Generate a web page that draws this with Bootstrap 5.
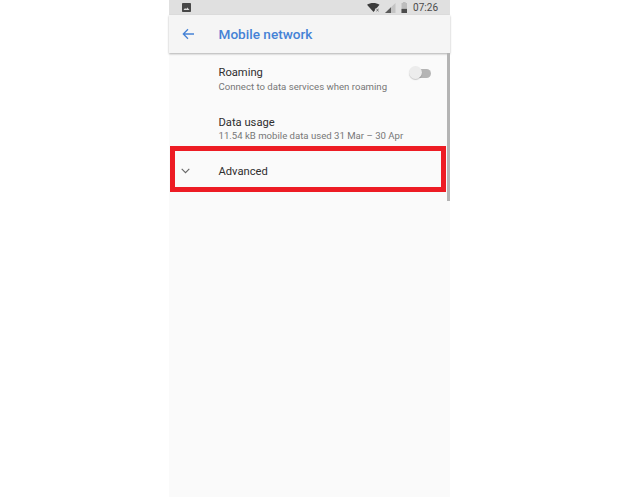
<!DOCTYPE html>
<html lang="en">
<head>
<meta charset="utf-8">
<title>Mobile network</title>
<link href="https://cdn.jsdelivr.net/npm/bootstrap@5.3.0/dist/css/bootstrap.min.css" rel="stylesheet">
<style>
html,body{height:100%;background:#fff;overflow:hidden}
body{font-family:Roboto,"Liberation Sans",sans-serif}
.phone{width:281px;height:497px;margin-left:169px;background:#fafafa;position:relative}
.statusbar{height:15px;background:#e0e0e0;padding:0 12px 0 13px;color:#444}
.stat-icons{gap:5px}
.clock{font-size:10px;color:#4a4a4a;line-height:15px;margin-left:1px}
.appbar{height:38px;background:#f5f5f5;box-shadow:0 1px 2px rgba(0,0,0,.3);position:relative;color:#3f7fd0}
.backcell{width:49.5px;padding-left:13px}
.apptitle{font-size:13.6px;font-weight:500;color:#4582d6;margin:0}
.rowitem{padding-left:49.5px;padding-right:19px}
.rowa{height:48px;padding-top:12px}
.rowb{height:50px;padding-top:14.5px}
.rowb .ttl{line-height:13px}
.rowc{height:40px;color:#333}
.ttl{font-size:11.2px;line-height:15px;color:#2f2f2f}
.sub{font-size:9.6px;line-height:13px;color:#777;white-space:nowrap}
.chev{width:49.5px;padding-left:12px}
.switcher{width:22px;height:14px;position:relative;margin-top:1px}
.track{position:absolute;left:3px;right:0;top:2.5px;height:9px;border-radius:4.5px;background:#b5b5b5}
.thumb{position:absolute;left:0;top:0;width:13px;height:13px;border-radius:50%;background:#ececec;box-shadow:0 1px 1px rgba(0,0,0,.2)}
.redbox{position:absolute;left:1px;top:146px;width:276px;height:46px;border:5px solid #ed1c24}
.scrollthumb{position:absolute;right:0;top:53px;width:3px;height:148px;background:#b4b4b4}
</style>
</head>
<body>
<div class="phone">
  <div class="statusbar d-flex align-items-center justify-content-between">
    <svg width="9" height="9" viewBox="0 0 9 9"><rect width="9" height="9" rx=".8" fill="#484848"/><path d="M1.5 7l1.600-2 1 1.200 1.200-1.600L7.500 7z" fill="#e0e0e0"/></svg>
    <div class="stat-icons d-flex align-items-center">
      <svg width="13" height="9" viewBox="0 0 13 9"><path d="M0 1.800C3.500-.6 9-.6 12.500 1.800L6.500 9z" fill="#3c3c3c"/><path d="M8.600 5.500l3.400 3.500M12 5.500L8.600 9" stroke="#e0e0e0" stroke-width="2.400"/><path d="M9.400 6l2.200 2.200M11.600 6L9.400 8.200" stroke="#555" stroke-width=".8"/></svg>
      <svg width="11" height="10" viewBox="0 0 11 10"><path d="M0 10L10.500 0v10z" fill="#c4c4c4"/><path d="M0 10L6 4.300V10z" fill="#5a5a5a"/></svg>
      <svg width="6.500" height="11" viewBox="0 0 7 12"><path d="M2 0h3v1h1.500v11H.5V1H2z" fill="#bdbdbd"/><rect x=".5" y="7.500" width="6" height="4.500" fill="#4c4c4c"/></svg>
      <span class="clock">07:26</span>
    </div>
  </div>
  <div class="appbar d-flex align-items-center">
    <div class="backcell d-flex">
      <svg width="13" height="12" viewBox="0 0 13 12"><path d="M12 6H1.500M6 1.300 1.300 6 6 10.700" fill="none" stroke="#4582d6" stroke-width="1.300"/></svg>
    </div>
    <h1 class="apptitle">Mobile network</h1>
  </div>
  <div class="rowitem rowa d-flex justify-content-between">
    <div>
      <div class="ttl">Roaming</div>
      <div class="sub">Connect to data services when roaming</div>
    </div>
    <div class="switcher"><span class="track"></span><span class="thumb"></span></div>
  </div>
  <div class="rowitem rowb">
    <div class="ttl">Data usage</div>
    <div class="sub">11.54 kB mobile data used 31 Mar – 30 Apr</div>
  </div>
  <div class="rowc d-flex align-items-center">
    <div class="chev d-flex"><svg width="9" height="6" viewBox="0 0 9 6"><path d="M.7.900 4.500 4.700 8.300.900" fill="none" stroke="#666" stroke-width="1.100"/></svg></div>
    <div class="ttl">Advanced</div>
  </div>
  <div class="redbox"></div>
  <div class="scrollthumb"></div>
</div>
</body>
</html>
